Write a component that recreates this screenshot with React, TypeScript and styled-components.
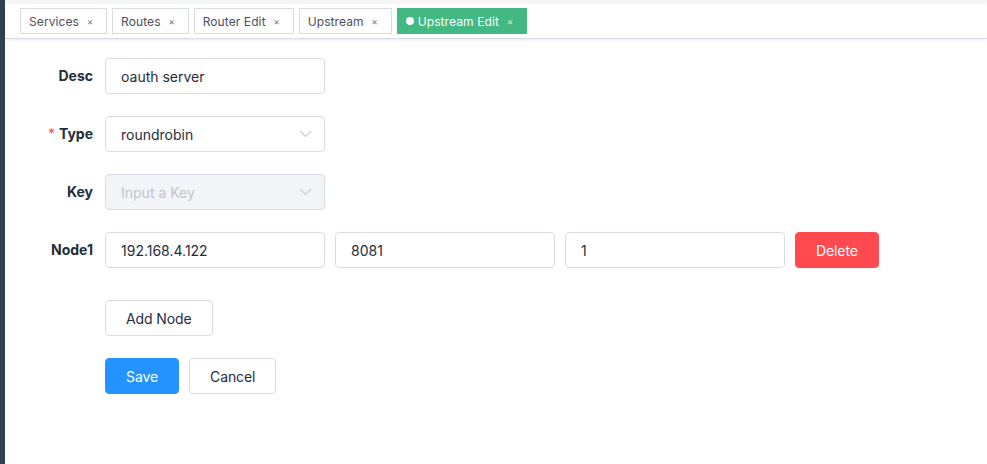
import React, { FC } from "react";
import styled, { createGlobalStyle } from "styled-components";

const GlobalStyle = createGlobalStyle`
  html, body {
    margin: 0;
    padding: 0;
    background: #fff;
    font-family: Inter, "Noto Sans", "Liberation Sans", sans-serif;
  }
  * {
    box-sizing: border-box;
  }
`;

const Layout = styled.div`
  display: flex;
  height: 464px;
  overflow: hidden;
`;

const Sidebar = styled.div`
  width: 5px;
  flex-shrink: 0;
  background: #304156;
`;

const Main = styled.div`
  flex: 1;
  display: flex;
  flex-direction: column;
`;

const NavEdge = styled.div`
  height: 4px;
  background: linear-gradient(#f4f4f5, #fbfbfc);
  box-shadow: 0 1px 1px rgba(0, 21, 41, 0.06);
`;

const TagsBar = styled.div`
  height: 35px;
  display: flex;
  align-items: flex-start;
  gap: 5px;
  padding: 4px 0 0 15px;
  background: #fff;
  border-bottom: 1px solid #d8dce5;
  box-shadow: 0 1px 3px 0 rgba(0, 0, 0, 0.08), 0 0 3px 0 rgba(0, 0, 0, 0.04);
`;

const Tag = styled.div<{ $active?: boolean }>`
  display: flex;
  align-items: center;
  height: 26px;
  padding: 0 8px;
  font-size: 12px;
  letter-spacing: 0.1px;
  color: ${(p) => (p.$active ? "#fff" : "#495060")};
  background: ${(p) => (p.$active ? "#42b983" : "#fff")};
  border: 1px solid ${(p) => (p.$active ? "#42b983" : "#d8dce5")};

  &::before {
    content: "";
    display: ${(p) => (p.$active ? "inline-block" : "none")};
    width: 8px;
    height: 8px;
    border-radius: 50%;
    background: #fff;
    margin-right: 4px;
  }
`;

const TagClose = styled.span`
  width: 16px;
  margin-left: 3px;
  text-align: center;
  font-size: 10px;
  line-height: 1;
  opacity: 0.75;
`;

const Form = styled.div`
  display: flex;
  flex-direction: column;
  gap: 22px;
  padding-top: 19px;
`;

const Row = styled.div<{ $extraTop?: number }>`
  display: flex;
  align-items: center;
  gap: 10px;
  margin-top: ${(p) => p.$extraTop || 0}px;
`;

const Label = styled.label`
  width: 100px;
  flex-shrink: 0;
  margin-right: -10px;
  padding-right: 12px;
  text-align: right;
  font-size: 14px;
  font-weight: 700;
  color: #1f2d3d;
  line-height: 36px;
`;

const Star = styled.span`
  color: #ff4949;
  margin-right: 4px;
  font-weight: 400;
`;

const Field = styled.div<{ $disabled?: boolean }>`
  position: relative;
  width: 220px;
  height: 36px;
  display: flex;
  align-items: center;
  padding: 0 15px;
  border: 1px solid #d8dce5;
  border-radius: 4px;
  background: ${(p) => (p.$disabled ? "#f3f4f7" : "#fff")};
  font-size: 14px;
  color: ${(p) => (p.$disabled ? "#bfc3cb" : "#1f2d3d")};
`;

const Arrow = styled.svg`
  position: absolute;
  right: 12px;
  top: 50%;
  margin-top: -4px;
`;

const Button = styled.button<{ $kind?: "primary" | "danger" }>`
  height: 36px;
  padding: 0 20px;
  border-radius: 4px;
  font-family: inherit;
  font-size: 14px;
  letter-spacing: -0.1px;
  cursor: pointer;
  border: 1px solid
    ${(p) =>
      p.$kind === "primary" ? "#2492ff" : p.$kind === "danger" ? "#ff4b50" : "#d8dce5"};
  background: ${(p) =>
    p.$kind === "primary" ? "#2492ff" : p.$kind === "danger" ? "#ff4b50" : "#fff"};
  color: ${(p) => (p.$kind ? "#fff" : "#1f2d3d")};
`;

const Spacer = styled.div`
  width: 90px;
  flex-shrink: 0;
`;

const Chevron: FC = () => (
  <Arrow width="13" height="8" viewBox="0 0 13 8" fill="none">
    <path d="M1 1l5.5 5.5L12 1" stroke="#c8ccd4" strokeWidth="1.2" />
  </Arrow>
);

const tags = ["Services", "Routes", "Router Edit", "Upstream", "Upstream Edit"];

const App: FC = () => {
  return (
    <Layout>
      <GlobalStyle />
      <Sidebar />
      <Main>
        <NavEdge />
        <TagsBar>
          {tags.map((t, i) => (
            <Tag key={t} $active={i === tags.length - 1}>
              {t}
              <TagClose>×</TagClose>
            </Tag>
          ))}
        </TagsBar>

        <Form>
          <Row>
            <Label>Desc</Label>
            <Field>oauth server</Field>
          </Row>
          <Row>
            <Label>
              <Star>*</Star>Type
            </Label>
            <Field>
              roundrobin
              <Chevron />
            </Field>
          </Row>
          <Row>
            <Label>Key</Label>
            <Field $disabled>
              Input a Key
              <Chevron />
            </Field>
          </Row>
          <Row>
            <Label>Node1</Label>
            <Field>192.168.4.122</Field>
            <Field>8081</Field>
            <Field>1</Field>
            <Button $kind="danger">Delete</Button>
          </Row>
          <Row $extraTop={10}>
            <Spacer />
            <Button>Add Node</Button>
          </Row>
          <Row>
            <Spacer />
            <Button $kind="primary">Save</Button>
            <Button>Cancel</Button>
          </Row>
        </Form>
      </Main>
    </Layout>
  );
};

export default App;
